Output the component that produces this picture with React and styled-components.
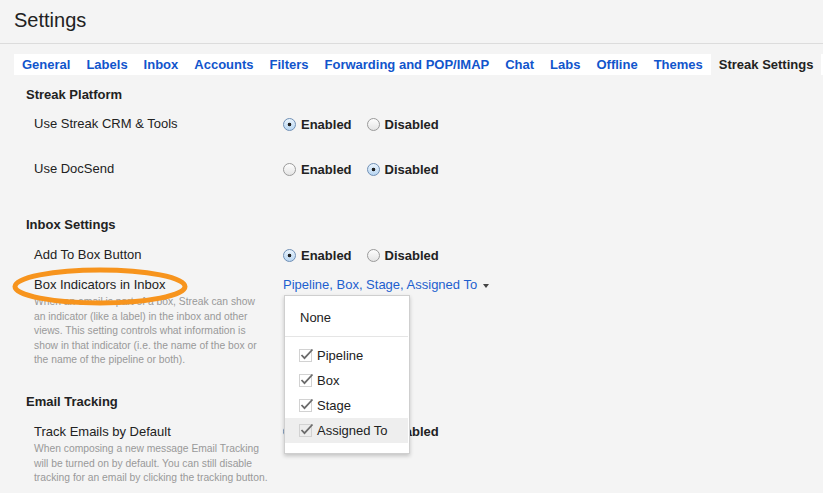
import React from "react";
import styled, { createGlobalStyle } from "styled-components";

const Global = createGlobalStyle`
  html, body { margin: 0; padding: 0; background: #f4f4f4; }
  body { font-family: "Liberation Sans", Arial, sans-serif; color: #222; width: 823px; height: 493px; overflow: hidden; }
`;

const Page = styled.div`
  position: relative;
  width: 823px;
  height: 493px;
  overflow: hidden;
`;

const Header = styled.div`
  height: 44px;
  border-bottom: 1px solid #dcdcdc;
  padding: 8px 0 0 14px;
  box-sizing: border-box;
`;

const Title = styled.div`
  font-size: 20px;
  line-height: 24px;
  color: #222;
`;

const TabBar = styled.div`
  display: flex;
  margin: 10px 0 0 14px;
  height: 21px;
  background: #fff;
`;

const Tab = styled.div`
  padding: 0 8px;
  font-size: 13px;
  font-weight: bold;
  line-height: 21px;
  color: ${(p) => (p.$active ? "#222" : "#15c")};
  background: ${(p) => (p.$active ? "#f4f4f4" : "transparent")};
  white-space: nowrap;
`;

const Content = styled.div`
  padding-left: 26px;
`;

const SectionHeader = styled.div`
  margin-top: ${(p) => p.$mt}px;
  height: 20px;
  line-height: 20px;
  font-size: 13px;
  font-weight: bold;
`;

const Row = styled.div`
  display: flex;
  align-items: flex-start;
  margin-top: ${(p) => p.$mt || 10}px;
  padding-left: 8px;
  position: relative;
`;

const LabelCol = styled.div`
  width: 249px;
  flex: none;
`;

const Label = styled.div`
  font-size: 13px;
  line-height: 20px;
  height: 20px;
  color: #222;
`;

const Desc = styled.div`
  width: ${(p) => p.$w}px;
  font-size: 10.3px;
  line-height: 14.6px;
  color: #999;
`;

const Controls = styled.div`
  display: flex;
  align-items: center;
  height: 20px;
`;

const RadioLabel = styled.label`
  display: flex;
  align-items: center;
  font-size: 13px;
  font-weight: bold;
  color: #222;
  margin-right: 15px;
`;

const Radio = styled.span`
  width: 11px;
  height: 11px;
  border-radius: 50%;
  border: 1px solid ${(p) => (p.$on ? "#6f8fb5" : "#9a9a9a")};
  background: ${(p) =>
    p.$on
      ? "radial-gradient(circle at 50% 50%, #222 0 1.6px, transparent 2.1px), linear-gradient(#e9f3fc, #b8d6f2)"
      : "linear-gradient(#fdfdfd, #e4e4e4)"};
  margin-right: 5px;
  flex: none;
  box-sizing: content-box;
`;

const DropLink = styled.div`
  display: flex;
  align-items: center;
  font-size: 13px;
  color: #1d5fcf;
  line-height: 20px;
  white-space: nowrap;
  cursor: pointer;
`;

const Caret = styled.span`
  margin-left: 6px;
  width: 0;
  height: 0;
  border-left: 3.5px solid transparent;
  border-right: 3.5px solid transparent;
  border-top: 4px solid #444;
  margin-top: 2px;
`;

const Menu = styled.div`
  position: absolute;
  left: 258px;
  top: 20px;
  width: 124px;
  background: #fff;
  border: 1px solid #cfcfcf;
  box-shadow: 0 2px 4px rgba(0, 0, 0, 0.2);
  padding: 7px 0 10px;
  z-index: 5;
`;

const MenuItem = styled.div`
  display: flex;
  align-items: center;
  height: ${(p) => (p.$plain ? 28 : 25)}px;
  padding-left: ${(p) => (p.$plain ? 15 : 14)}px;
  margin-right: 1px;
  font-size: 13px;
  color: #222;
  background: ${(p) => (p.$hover ? "#eeeeee" : "transparent")};
`;

const Separator = styled.div`
  height: 1px;
  background: #e5e5e5;
  margin: 5px 1px 6px 0;
`;

const CheckBox = styled.span`
  position: relative;
  width: 11px;
  height: 11px;
  border: 1px solid #d2d2d2;
  background: ${(p) => (p.$hover ? "#ececec" : "#fff")};
  margin-right: 5px;
  flex: none;
  svg {
    position: absolute;
    left: 0px;
    top: -3px;
  }
`;

const Ellipse = styled.svg`
  position: absolute;
  left: 12px;
  top: 267px;
  pointer-events: none;
  z-index: 6;
`;

const Check = ({ hover }) => (
  <CheckBox $hover={hover}>
    <svg width="14" height="14" viewBox="0 0 14 14">
      <path d="M1.5 8 L4.5 11.2 L12.5 2.5" fill="none" stroke="#6b6b6b" strokeWidth="1.8" />
    </svg>
  </CheckBox>
);

const RadioPair = ({ on }) => (
  <Controls>
    <RadioLabel>
      <Radio $on={on === "en"} />
      Enabled
    </RadioLabel>
    <RadioLabel>
      <Radio $on={on === "dis"} />
      Disabled
    </RadioLabel>
  </Controls>
);

const tabs = [
  "General",
  "Labels",
  "Inbox",
  "Accounts",
  "Filters",
  "Forwarding and POP/IMAP",
  "Chat",
  "Labs",
  "Offline",
  "Themes",
];

export default function App() {
  return (
    <Page>
      <Global />
      <Header>
        <Title>Settings</Title>
      </Header>
      <TabBar>
        {tabs.map((t) => (
          <Tab key={t}>{t}</Tab>
        ))}
        <Tab $active>Streak Settings</Tab>
      </TabBar>
      <Content>
        <SectionHeader $mt={10}>Streak Platform</SectionHeader>
        <Row $mt={9}>
          <LabelCol>
            <Label>Use Streak CRM &amp; Tools</Label>
          </LabelCol>
          <RadioPair on="en" />
        </Row>
        <Row $mt={25}>
          <LabelCol>
            <Label>Use DocSend</Label>
          </LabelCol>
          <RadioPair on="dis" />
        </Row>

        <SectionHeader $mt={36}>Inbox Settings</SectionHeader>
        <Row>
          <LabelCol>
            <Label>Add To Box Button</Label>
          </LabelCol>
          <RadioPair on="en" />
        </Row>
        <Row>
          <LabelCol>
            <Label>Box Indicators in Inbox</Label>
            <Desc $w={230}>
              When an email is part of a box, Streak can show an indicator (like a
              label) in the inbox and other views. This setting controls what
              information is show in that indicator (i.e. the name of the box or
              the name of the pipeline or both).
            </Desc>
          </LabelCol>
          <DropLink>
            Pipeline, Box, Stage, Assigned To
            <Caret />
          </DropLink>
          <Menu>
            <MenuItem $plain>None</MenuItem>
            <Separator />
            <MenuItem>
              <Check />
              Pipeline
            </MenuItem>
            <MenuItem>
              <Check />
              Box
            </MenuItem>
            <MenuItem>
              <Check />
              Stage
            </MenuItem>
            <MenuItem $hover>
              <Check hover />
              Assigned To
            </MenuItem>
          </Menu>
        </Row>

        <SectionHeader $mt={24}>Email Tracking</SectionHeader>
        <Row>
          <LabelCol>
            <Label>Track Emails by Default</Label>
            <Desc $w={242}>
              When composing a new message Email Tracking will be turned on by
              default. You can still disable tracking for an email by clicking the
              tracking button.
            </Desc>
          </LabelCol>
          <RadioPair on="en" />
        </Row>
      </Content>
      <Ellipse width="176" height="39" viewBox="0 0 176 39">
        <ellipse cx="88" cy="19.5" rx="85" ry="16.5" fill="none" stroke="#f7941d" strokeWidth="5" />
      </Ellipse>
    </Page>
  );
}
